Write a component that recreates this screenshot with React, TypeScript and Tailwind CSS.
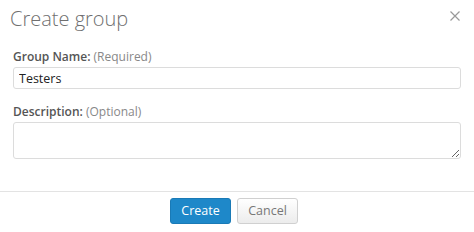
export default function App() {
  return (
    <div
      className="w-[474px] h-[232px] bg-white overflow-hidden"
      style={{ fontFamily: '"Open Sans", "Liberation Sans", sans-serif' }}
    >
      {/* HEADER */}
      <div className="flex items-start justify-between pt-[7px] pl-[10px] pr-[13px]">
        <h1 className="text-[20px] leading-[24px] font-light text-[#6f6f6f]">Create group</h1>
        <button className="mt-[3px] text-[#999]">
          <svg width="12" height="12" viewBox="0 0 12 12" stroke="currentColor" strokeWidth="1.2" fill="none">
            <path d="M1.5 1.5 L10.5 10.5 M10.5 1.5 L1.5 10.5" />
          </svg>
        </button>
      </div>

      {/* BODY */}
      <div className="px-[13px] pt-[18px]">
        <label className="block text-[12px] leading-[16px] text-[#555]">
          <span className="font-semibold">Group Name:</span>{" "}
          <span className="text-[#888]">(Required)</span>
        </label>
        <input
          type="text"
          defaultValue="Testers"
          className="mt-[2px] block w-[448px] h-[22px] px-[5px] rounded-[3px] border border-[#dcdcdc] bg-white text-[12.5px] text-[#222] focus:outline-none"
        />

        <label className="block mt-[15px] text-[12px] leading-[16px] text-[#555]">
          <span className="font-semibold">Description:</span>{" "}
          <span className="text-[#888]">(Optional)</span>
        </label>
        <textarea className="mt-[2px] block w-[448px] h-[37px] rounded-[3px] border border-[#dcdcdc] bg-white focus:outline-none" />
      </div>

      {/* FOOTER */}
      <div className="mt-[32px] border-t border-[#e3e3e3] pt-[6px] pr-[6px] flex justify-center gap-[6px]">
        <button className="w-[61px] h-[26px] rounded-[3px] bg-[#1e88c9] border border-[#1a7ab6] text-white text-[12.5px]">
          Create
        </button>
        <button className="w-[61px] h-[26px] rounded-[3px] bg-gradient-to-b from-white to-[#ececec] border border-[#d0d0d0] text-[#777] text-[12.5px]">
          Cancel
        </button>
      </div>
    </div>
  );
}
